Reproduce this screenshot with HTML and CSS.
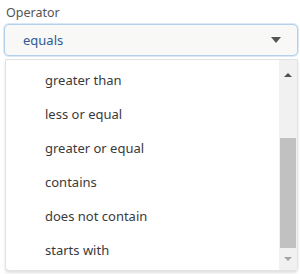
FILE: index.html
```html
<!DOCTYPE html>
<html>
<head>
<meta charset="utf-8">
<title>Operator</title>
<link rel="stylesheet" href="styles.css">
</head>
<body>
	<div class="field">
		<label class="field_label">Operator</label>
		<div class="select_box">
			<span class="select_value">equals</span>
			<span class="caret"></span>
		</div>

		<div class="menu">
			<ul class="menu_list">
				<li>greater than</li>
				<li>less or equal</li>
				<li>greater or equal</li>
				<li>contains</li>
				<li>does not contain</li>
				<li>starts with</li>
			</ul>
			<div class="scrollbar">
				<div class="sb_btn sb_up"><span class="sb_arrow_up"></span></div>
				<div class="sb_track"><div class="sb_thumb"></div></div>
				<div class="sb_btn sb_down"><span class="sb_arrow_down"></span></div>
			</div>
		</div>
	</div>
</body>
</html>
```

FILE: styles.css
```css
html, body {
	height: 100%;
}
body {
	margin: 0;
	background: #ffffff;
	font-family: "Noto Sans", "Open Sans", sans-serif;
	font-size: 13px;
	color: #333333;
}
.field {
	position: relative;
	height: 100%;
	box-sizing: border-box;
	padding: 5px 2px 0 4px;
}
.field_label {
	display: block;
	height: 16px;
	line-height: 16px;
	margin: 0 0 3px 2px;
	color: #555555;
	font-size: 12.5px;
}
.select_box {
	display: flex;
	align-items: center;
	justify-content: space-between;
	height: 30px;
	border: 1px solid #b3d1ec;
	border-radius: 5px;
	box-shadow: 0 0 0 1px #dbe8f5;
	background: #f8f8f7;
	padding: 0 16px 0 18px;
}
.select_value {
	color: #2f5a94;
	font-size: 13px;
}
.caret {
	width: 0;
	height: 0;
	border-left: 5px solid transparent;
	border-right: 5px solid transparent;
	border-top: 6px solid #555555;
}
.menu {
	position: absolute;
	top: 59px;
	left: 5px;
	width: 291px;
	height: 210px;
	border: 1px solid #e2e2e2;
	border-radius: 0 0 4px 4px;
	background: #ffffff;
	box-shadow: 0 2px 3px rgba(0, 0, 0, 0.12);
	display: flex;
	overflow: hidden;
	z-index: 2;
}
.menu_list {
	flex: 1;
	list-style: none;
	margin: 0;
	padding: 3px 0 0 0;
}
.menu_list li {
	height: 34px;
	line-height: 34px;
	padding-left: 39px;
	color: #3a3a3a;
	font-size: 13px;
}
.scrollbar {
	width: 18px;
	display: flex;
	flex-direction: column;
	background: #f1f1f1;
}
.sb_btn {
	display: flex;
	align-items: center;
	justify-content: center;
}
.sb_up {
	height: 30px;
}
.sb_down {
	height: 22px;
}
.sb_track {
	flex: 1;
	display: flex;
	flex-direction: column;
	justify-content: flex-end;
	padding: 0 1px;
}
.sb_thumb {
	height: 110px;
	background: #c1c1c1;
}
.sb_arrow_up {
	width: 0;
	height: 0;
	border-left: 4px solid transparent;
	border-right: 4px solid transparent;
	border-bottom: 4px solid #505050;
}
.sb_arrow_down {
	width: 0;
	height: 0;
	border-left: 4px solid transparent;
	border-right: 4px solid transparent;
	border-top: 4px solid #a3a3a3;
}
```
